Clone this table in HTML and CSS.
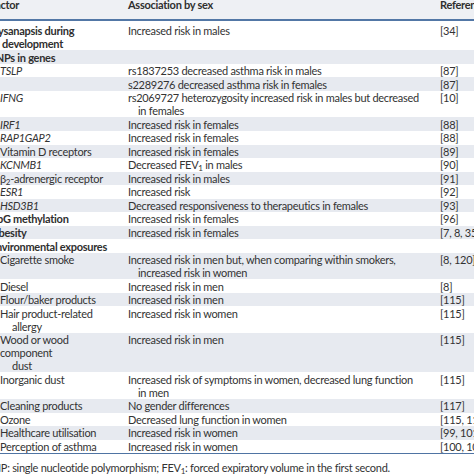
FILE: index.html
```html
<!DOCTYPE html>
<html lang="en">
<head>
<meta charset="utf-8">
<link rel="stylesheet" href="styles.css">
</head>
<body>
<div class="page">
  <div class="tbl">
    <div class="row head"><div class="cell">Factor</div><div class="cell">Association by sex</div><div class="cell">References</div></div>
    <div class="row first"><div class="cell b hangb">Dysanapsis during<br>development</div><div class="cell">Increased risk in males</div><div class="cell">[34]</div></div>
    <div class="row alt"><div class="cell b">SNPs in genes</div><div class="cell"></div><div class="cell"></div></div>
    <div class="row"><div class="cell sub i">TSLP</div><div class="cell">rs1837253 decreased asthma risk in males</div><div class="cell">[87]</div></div>
    <div class="row alt"><div class="cell sub i"></div><div class="cell">s2289276 decreased asthma risk in females</div><div class="cell">[87]</div></div>
    <div class="row"><div class="cell sub i">IFNG</div><div class="cell hang">rs2069727 heterozygosity increased risk in males but decreased<br>in females</div><div class="cell">[10]</div></div>
    <div class="row alt"><div class="cell sub i">IRF1</div><div class="cell">Increased risk in females</div><div class="cell">[88]</div></div>
    <div class="row"><div class="cell sub i">RAP1GAP2</div><div class="cell">Increased risk in females</div><div class="cell">[88]</div></div>
    <div class="row alt"><div class="cell sub">Vitamin D receptors</div><div class="cell">Increased risk in females</div><div class="cell">[89]</div></div>
    <div class="row"><div class="cell sub i">KCNMB1</div><div class="cell">Decreased FEV<sub>1</sub> in males</div><div class="cell">[90]</div></div>
    <div class="row alt"><div class="cell sub">β<sub>2</sub>-adrenergic receptor</div><div class="cell">Increased risk in males</div><div class="cell">[91]</div></div>
    <div class="row"><div class="cell sub i">ESR1</div><div class="cell">Increased risk</div><div class="cell">[92]</div></div>
    <div class="row alt"><div class="cell sub i">HSD3B1</div><div class="cell">Decreased responsiveness to therapeutics in females</div><div class="cell">[93]</div></div>
    <div class="row"><div class="cell b">CpG methylation</div><div class="cell">Increased risk in females</div><div class="cell">[96]</div></div>
    <div class="row alt"><div class="cell b">Obesity</div><div class="cell">Increased risk in females</div><div class="cell">[7, 8, 35]</div></div>
    <div class="row"><div class="cell b">Environmental exposures</div><div class="cell"></div><div class="cell"></div></div>
    <div class="row alt"><div class="cell sub">Cigarette smoke</div><div class="cell hang">Increased risk in men but, when comparing within smokers,<br>increased risk in women</div><div class="cell">[8, 120]</div></div>
    <div class="row"><div class="cell sub">Diesel</div><div class="cell">Increased risk in men</div><div class="cell">[8]</div></div>
    <div class="row alt"><div class="cell sub">Flour/baker products</div><div class="cell">Increased risk in men</div><div class="cell">[115]</div></div>
    <div class="row"><div class="cell sub hangs">Hair product-related<br>allergy</div><div class="cell">Increased risk in women</div><div class="cell">[115]</div></div>
    <div class="row alt"><div class="cell sub">Wood or wood<br>component<br><span class="ind">dust</span></div><div class="cell">Increased risk in men</div><div class="cell">[115]</div></div>
    <div class="row"><div class="cell sub">Inorganic dust</div><div class="cell hang">Increased risk of symptoms in women, decreased lung function<br>in men</div><div class="cell">[115]</div></div>
    <div class="row alt"><div class="cell sub">Cleaning products</div><div class="cell">No gender differences</div><div class="cell">[117]</div></div>
    <div class="row"><div class="cell sub">Ozone</div><div class="cell">Decreased lung function in women</div><div class="cell">[115, 118]</div></div>
    <div class="row alt"><div class="cell sub">Healthcare utilisation</div><div class="cell">Increased risk in women</div><div class="cell">[99, 101]</div></div>
    <div class="row last"><div class="cell sub">Perception of asthma</div><div class="cell">Increased risk in women</div><div class="cell">[100, 102]</div></div>
  </div>
  <p class="note">SNP: single nucleotide polymorphism; FEV<sub>1</sub>: forced expiratory volume in the first second.</p>
</div>
</body>
</html>
```
FILE: styles.css
```css
html, body {
  margin: 0;
  padding: 0;
  background: #ffffff;
  overflow: hidden;
}
.page {
  width: 474px;
  height: 474px;
  overflow: hidden;
  font-family: "Lato", "Open Sans", sans-serif;
  font-size: 11px;
  letter-spacing: -0.28px;
  color: #333333;
}
.tbl {
  display: flex;
  flex-direction: column;
  width: 510px;
  margin: -2px 0 0 -12px;
}
.row {
  display: grid;
  grid-template-columns: 138px 312px 60px;
  line-height: 13px;
  padding: 0.28px 0 0.28px;
}
.cell {
  padding: 0 2px;
  white-space: nowrap;
}
.row.head {
  font-weight: 700;
  color: #2f2f2f;
  background: #eef0f4;
  padding: 0 0 7.8px;
  border-bottom: 2px solid #5277a6;
}
.row.alt { background: #e7eaf0; }
.row.first { padding-top: 3.3px; }
.row.last { border-bottom: 1.5px solid #4f74a3; }
.b { font-weight: 700; color: #2f2f2f; }
.i { font-style: italic; }
.cell.sub { padding-left: 12px; }
.cell.hang { padding-left: 12px; text-indent: -10px; }
.cell.hangb { padding-left: 14px; text-indent: -12px; }
.cell.hangs { padding-left: 24px; text-indent: -12px; }
.ind { padding-left: 12px; }
sub {
  font-size: 8px;
  line-height: 0;
  vertical-align: -2px;
}
.note {
  margin: 0 0 0 -13px;
  padding-top: 6.5px;
  line-height: 13px;
  white-space: nowrap;
}
```
